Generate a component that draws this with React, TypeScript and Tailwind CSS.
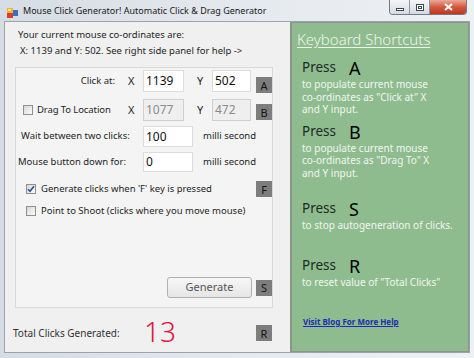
import React from "react";

function Check({ checked }: { checked?: boolean }) {
  return (
    <span className="w-[10px] h-[10px] shrink-0 border border-[#8e8f8f] bg-gradient-to-br from-[#d8d8d8] to-[#fbfbfb] flex items-center justify-center">
      {checked && (
        <svg width="8" height="8" viewBox="0 0 8 8">
          <path d="M1 4.2 L3 6.3 L7 1.2" fill="none" stroke="#2b4f9e" strokeWidth="1.6" />
        </svg>
      )}
    </span>
  );
}

function Badge({ l, className = "" }: { l: string; className?: string }) {
  return (
    <div
      className={
        "w-[16px] h-[16px] shrink-0 bg-[#7d7d7d] flex items-center justify-center text-[11px] leading-none text-[#141414] " +
        className
      }
    >
      {l}
    </div>
  );
}

function Input({ v, w, h, disabled }: { v: string; w: string; h: string; disabled?: boolean }) {
  return (
    <div
      className={
        w +
        " " +
        h +
        " shrink-0 flex items-center pl-[2px] text-[12px] leading-none border " +
        (disabled
          ? "bg-[#efefef] border-[#cfcfcf] text-[#8a8a8a]"
          : "bg-white border-[#dcdcdc] text-[#111]")
      }
    >
      {v}
    </div>
  );
}

function PressRow({ k, mt }: { k: string; mt: string }) {
  return (
    <div className={"pl-[10px] h-[18px] flex items-center leading-none " + mt}>
      <span className="text-[13.5px] leading-none text-[#1e2a1e]">Press</span>
      <span className="ml-[13px] text-[18px] leading-none text-black">{k}</span>
    </div>
  );
}

export default function App() {
  return (
    <div className="w-[474px] h-[358px] overflow-hidden flex flex-col bg-gradient-to-r from-[#d6dce3] via-[#e4e9ee] to-[#eef1f4] font-['Noto_Sans',sans-serif] text-[#1e1e1e]">
      {/* title bar */}
      <div className="h-[21px] flex items-start shrink-0">
        <svg width="11" height="10" viewBox="0 0 11 10" className="ml-[7px] mt-[8px]">
          <rect x="0" y="0" width="6" height="5" fill="#f2b531" />
          <rect x="0" y="5" width="6" height="5" fill="#d8402a" />
          <rect x="6" y="2" width="5" height="6" fill="#3a6fc4" />
          <rect x="1" y="1" width="3" height="2" fill="#fde48a" />
        </svg>
        <div className="ml-[5px] mt-[4px] text-[9px] leading-[14px] text-[#1a1a1a] whitespace-nowrap">
          Mouse Click Generator! Automatic Click &amp; Drag Generator
        </div>
        <div className="ml-auto mr-[7px] flex h-[15px] border border-t-0 border-[#707b88] rounded-b-[4px] overflow-hidden">
          <div className="w-[20px] h-full bg-gradient-to-b from-[#f4f6f8] to-[#d5dbe2] flex items-end justify-center pb-[3px] border-r border-[#8e98a4]">
            <div className="w-[8px] h-[3px] bg-white border border-[#3d4550]" />
          </div>
          <div className="w-[20px] h-full bg-gradient-to-b from-[#f4f6f8] to-[#d5dbe2] flex items-center justify-center border-r border-[#8e98a4]">
            <div className="w-[8px] h-[7px] border border-[#3d4550] bg-white flex items-center justify-center">
              <div className="w-[4px] h-[3px] border border-[#3d4550]" />
            </div>
          </div>
          <div className="w-[36px] h-full bg-gradient-to-b from-[#e9a99b] via-[#d2583e] to-[#c2361c] flex items-center justify-center">
            <svg width="9" height="8" viewBox="0 0 9 8">
              <path d="M1 1 L8 7 M8 1 L1 7" stroke="#ffffff" strokeWidth="2" />
            </svg>
          </div>
        </div>
      </div>

      {/* client */}
      <div className="mx-[4px] h-[332px] shrink-0 border border-[#9aa3ac] flex">
        {/* left panel */}
        <div className="w-[285px] bg-[#f0f0f0] flex flex-col">
          <div className="pl-[13px] pt-[5px] text-[9.5px] leading-[16px] whitespace-nowrap">
            <div>Your current mouse co-ordinates are:</div>
            <div className="pl-[2px]">X: 1139 and Y: 502. See right side panel for help -&gt;</div>
          </div>

          <div className="ml-[10px] mt-[8px] w-[258px] h-[241px] border border-[#d8d8d8] bg-[#f4f4f4] flex flex-col text-[9.5px] whitespace-nowrap">
            {/* row 1 */}
            <div className="flex items-center h-[22px] mt-[2px]">
              <div className="w-[100px] shrink-0 text-right pr-[1px]">Click at:</div>
              <div className="w-[27px] shrink-0 pl-[12px] text-[11px]">X</div>
              <Input v="1139" w="w-[41px]" h="h-[22px]" />
              <div className="w-[28px] shrink-0 pl-[13px] text-[11px]">Y</div>
              <Input v="502" w="w-[39px]" h="h-[22px]" />
              <Badge l="A" className="ml-auto self-start mt-[7px]" />
            </div>
            {/* row 2 */}
            <div className="flex items-center h-[22px] mt-[7px]">
              <div className="w-[100px] shrink-0 flex items-center pl-[7px]">
                <Check />
                <span className="ml-[4px] tracking-[-0.1px]">Drag To Location</span>
              </div>
              <div className="w-[27px] shrink-0 pl-[12px] text-[11px]">X</div>
              <Input v="1077" w="w-[41px]" h="h-[22px]" disabled />
              <div className="w-[28px] shrink-0 pl-[13px] text-[11px]">Y</div>
              <Input v="472" w="w-[39px]" h="h-[22px]" disabled />
              <Badge l="B" className="ml-auto self-start mt-[5px]" />
            </div>
            {/* row 3 */}
            <div className="flex items-center h-[21px] mt-[5px]">
              <div className="w-[127px] shrink-0 pl-[5px]">Wait between two clicks:</div>
              <Input v="100" w="w-[50px]" h="h-[21px]" />
              <div className="ml-[10px]">milli second</div>
            </div>
            {/* row 4 */}
            <div className="flex items-center h-[20px] mt-[5px]">
              <div className="w-[127px] shrink-0 pl-[2px]">Mouse button down for:</div>
              <Input v="0" w="w-[50px]" h="h-[20px]" />
              <div className="ml-[10px]">milli second</div>
            </div>
            {/* row F */}
            <div className="flex items-center h-[16px] mt-[9px] pl-[10px]">
              <Check checked />
              <span className="ml-[5px]">Generate clicks when 'F' key is pressed</span>
              <Badge l="F" className="ml-auto" />
            </div>
            {/* row point */}
            <div className="flex items-center h-[16px] mt-[6px] pl-[10px]">
              <Check />
              <span className="ml-[5px]">Point to Shoot (clicks where you move mouse)</span>
            </div>
            <div className="flex-1" />
            <div className="flex items-center justify-end mb-[9px]">
              <div className="w-[85px] h-[21px] border border-[#b0b0b0] rounded-[3px] bg-gradient-to-b from-[#f6f6f6] to-[#e6e6e6] flex items-center justify-center text-[11px] text-[#555]">
                Generate
              </div>
              <Badge l="S" className="ml-[4px]" />
            </div>
          </div>

          <div className="flex-1 flex items-center mt-[6px] pl-[8px] pr-[18px]">
            <div className="w-[131px] shrink-0 text-[10px] text-[#333] whitespace-nowrap">Total Clicks Generated:</div>
            <div className="text-[28px] leading-[30px] font-light text-[#dc143c] -mt-[4px]">13</div>
            <Badge l="R" className="ml-auto" />
          </div>
        </div>

        {/* right panel */}
        <div className="w-[179px] bg-[#8fbc8f] border border-l-2 border-[#8c948c] flex flex-col whitespace-nowrap">
          <div className="pl-[5px] pt-[5px] text-[15px] leading-[22px] font-light text-[#eef5ea] underline underline-offset-2">
            Keyboard Shortcuts
          </div>

          <PressRow k="A" mt="mt-[9px]" />
          <div className="pl-[10px] text-[10px] leading-[12.5px] mt-[1px] text-[#f1f6ee]">
            <div>to populate current mouse</div>
            <div>co-ordinates as "Click at" X</div>
            <div>and Y input.</div>
          </div>

          <PressRow k="B" mt="mt-[7px]" />
          <div className="pl-[10px] text-[10px] leading-[12.5px] mt-[1px] text-[#f1f6ee]">
            <div>to populate current mouse</div>
            <div>co-ordinates as "Drag To" X</div>
            <div>and Y input.</div>
          </div>

          <PressRow k="S" mt="mt-[21px]" />
          <div className="pl-[10px] text-[10px] leading-[12.5px] mt-[1px] text-[#f1f6ee]">
            to stop autogeneration of clicks.
          </div>

          <PressRow k="R" mt="mt-[25px]" />
          <div className="pl-[10px] text-[10px] leading-[12.5px] mt-[1px] text-[#f1f6ee]">
            to reset value of "Total Clicks"
          </div>

          <div className="pl-[11px] mt-[27px] text-[8px] leading-[14px] font-bold text-[#1d2bb0] underline">
            Visit Blog For More Help
          </div>
        </div>
      </div>
    </div>
  );
}
